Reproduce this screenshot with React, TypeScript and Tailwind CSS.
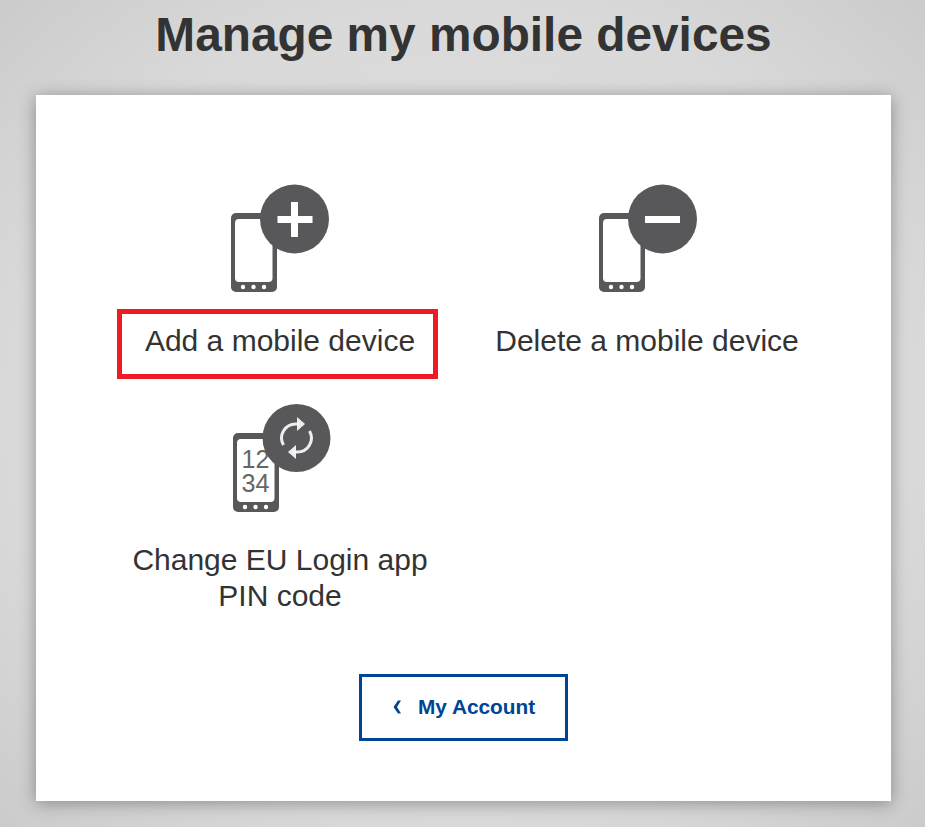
const GREY = "#58585a";

const PhoneBody = ({ x }: { x: number }) => (
  <g transform={`translate(${x} 0)`}>
    <rect x="0" y="29" width="46" height="79" rx="5" fill={GREY} />
    <rect x="4" y="35" width="37.5" height="63" rx="4" fill="#fff" />
    <circle cx="12" cy="103" r="2.2" fill="#fff" />
    <circle cx="22.5" cy="103" r="2.2" fill="#fff" />
    <circle cx="33" cy="103" r="2.2" fill="#fff" />
  </g>
);

const AddIcon = () => (
  <svg width="100" height="110" viewBox="0 0 100 110" aria-hidden="true">
    <PhoneBody x={1} />
    <circle cx="64.5" cy="35" r="34.5" fill={GREY} />
    <rect x="47.5" y="32" width="35" height="7" fill="#fff" />
    <rect x="61" y="18" width="7" height="35" fill="#fff" />
  </svg>
);

const DeleteIcon = () => (
  <svg width="100" height="110" viewBox="0 0 100 110" aria-hidden="true">
    <PhoneBody x={2} />
    <circle cx="65.5" cy="35" r="34.5" fill={GREY} />
    <rect x="48" y="32" width="35" height="7" fill="#fff" />
  </svg>
);

const PinIcon = () => (
  <svg className="overflow-visible" width="100" height="110" viewBox="0 0 100 110" aria-hidden="true">
    <PhoneBody x={3} />
    <g fill="#666" fontFamily="'Liberation Sans', sans-serif" fontSize="25">
      <text x="11.5" y="64" textLength="28" lengthAdjust="spacingAndGlyphs">12</text>
      <text x="11.5" y="88" textLength="28" lengthAdjust="spacingAndGlyphs">34</text>
    </g>
    <circle cx="66.5" cy="34" r="34" fill={GREY} />
    <g fill="none" stroke="#fff" strokeWidth="3" opacity="0.9">
      <path d="M53.5 41 A14 14 0 0 1 66 20 L69 20" />
      <path d="M79.5 27 A14 14 0 0 1 67 48 L64 48" />
    </g>
    <path d="M67 13 L75 20 L67 27 Z" fill="#fff" opacity="0.9" />
    <path d="M66 41 L58 48 L66 55 Z" fill="#fff" opacity="0.9" />
  </svg>
);

const tiles = [
  { key: "add", icon: <AddIcon />, label: ["Add a mobile device"], box: "border-[#ed1c24] pt-[9px] pb-[15px]" },
  { key: "delete", icon: <DeleteIcon />, label: ["Delete a mobile device"], box: "border-transparent pt-[9px] pb-[15px]" },
  { key: "pin", icon: <PinIcon />, label: ["Change EU Login app", "PIN code"], box: "border-transparent pt-[8px] pb-[16px]" },
];

export default function App() {
  return (
    <div
      className="h-[827px] overflow-hidden bg-[radial-gradient(ellipse_at_center,#e2e2e2_0%,#d9d9d9_70%,#cbcbcb_100%)] text-[#333]"
      style={{ fontFamily: "'Liberation Sans', Arial, sans-serif" }}
    >
      <h1 className="h-[95px] pt-[8px] pl-[2px] text-center text-[47.8px] leading-[54px] font-bold">Manage my mobile devices</h1>
      <main className="ml-[36px] h-[706px] w-[855px] bg-white pt-[89px] pl-[81px] shadow-[0_2px_16px_rgba(0,0,0,0.35)]">
        <div className="grid grid-cols-[321px_321px] gap-x-[46px] gap-y-[25px]">
          {tiles.map((tile) => (
            <a key={tile.key} className="flex flex-col">
              <div className="flex h-[110px] justify-center pl-[5px]">{tile.icon}</div>
              <div className={`mt-[15px] border-[5px] pl-[5px] text-center text-[30px] leading-[36px] ${tile.box}`}>
                {tile.label.map((line) => (
                  <div key={line}>{line}</div>
                ))}
              </div>
            </a>
          ))}
        </div>
        <div className="mt-[39px] pr-[81px]">
          <a className="mx-auto flex h-[67px] w-[209px] items-center gap-[16px] border-[3px] border-[#004494] pb-[2px] pl-[31px] text-[20.8px] font-bold text-[#004494]">
            <svg width="9" height="14" viewBox="0 0 9 14" aria-hidden="true">
              <path d="M8 0.5 L4 7 L8 13.5 L5 13.5 L0.5 7 L5 0.5 Z" fill="#004494" />
            </svg>
            My Account
          </a>
        </div>
      </main>
    </div>
  );
}
